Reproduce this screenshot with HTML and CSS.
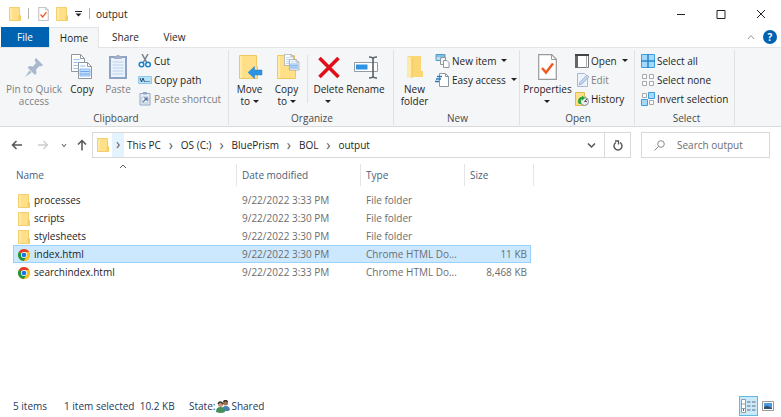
FILE: index.html
```html
<!DOCTYPE html>
<html lang="en">
<head>
    <meta charset="UTF-8">
    <meta name="viewport" content="width=device-width, initial-scale=1.0">
    <title>output</title>
    <link rel="stylesheet" href="styles.css">
</head>
<body>
    <!-- Shared icons -->
    <svg class="defs" width="0" height="0" aria-hidden="true">
        <symbol id="folder" viewBox="0 0 12 14">
            <path d="M.5.5h10v8h1v5H.5z" fill="#ffe089" stroke="#f3cf6b"/>
            <path d="M1 1h2v12H1z" fill="#ffe9a6"/>
            <path d="M9.5 8.5h2v5h-2z" fill="#f4cc62"/>
        </symbol>
        <symbol id="chrome" viewBox="0 0 24 24">
            <circle cx="12" cy="12" r="12" fill="#fbc116"/>
            <path d="M12 12 1.6 6A12 12 0 0 1 22.4 6H12z" fill="#e33b2e"/>
            <path d="M1.6 6A12 12 0 0 0 12 24l5.2-9-5.2-3z" fill="#229342"/>
            <path d="M12 6h10.4A12 12 0 0 1 12 24l5.2-9z" fill="#fbc116"/>
            <circle cx="12" cy="12" r="6" fill="#fff"/>
            <circle cx="12" cy="12" r="4.6" fill="#1a73e8"/>
        </symbol>
        <symbol id="check-page" viewBox="0 0 19 26">
            <path d="M.7.7h13l4.6 4.6v20H.7z" fill="#fff" stroke="#9a9a9a" stroke-width="1.2"/>
            <path d="M13.5.7v4.8h4.8" fill="none" stroke="#9a9a9a"/>
            <path d="m4 14 4 4.500 7-9" fill="none" stroke="#f0591e" stroke-width="2.400"/>
        </symbol>
        <symbol id="pages" viewBox="0 0 22 26">
            <path d="M.5.5h9l4 4v13H.5z" fill="#fff" stroke="#8f979f"/>
            <path d="M9.500.5v4h4" fill="none" stroke="#8f979f"/>
            <path d="M2.500 5.500h6m-6 3h9m-9 3h9m-9 3h9" stroke="#9cc3ef"/>
            <path d="M7.500 8.500h9l4 4v12h-13z" fill="#fff" stroke="#8f979f"/>
            <path d="M16.500 8.500v4h4" fill="none" stroke="#8f979f"/>
            <path d="M9.500 12h5M9 15h10v7H9z" stroke="#8dbaf0" fill="#c5dffa"/>
            <path d="M9.500 17.500h9m-9 2.500h9" stroke="#6ba6ea"/>
        </symbol>
    </svg>

    <header class="titlebar">
        <svg class="quick-icon" width="12" height="14"><use href="#folder"/></svg>
        <span class="divider"></span>
        <button class="quick" aria-label="Properties"><svg width="11" height="14"><use href="#check-page"/></svg></button>
        <button class="quick" aria-label="New folder"><svg width="12" height="14"><use href="#folder"/></svg></button>
        <button class="quick" aria-label="Customize toolbar"><svg width="7" height="6" viewBox="0 0 7 6"><path d="M0 .5h7" stroke="#222"/><path d="M.5 2.500h6l-3 3z" fill="#222"/></svg></button>
        <span class="divider"></span>
        <h1>output</h1>
        <div class="window-controls">
            <button aria-label="Minimize"><svg width="10" height="10"><path d="M1 5.500h8" stroke="#222"/></svg></button>
            <button aria-label="Maximize"><svg width="10" height="10"><path d="M1 1.500h8v8H1z" fill="none" stroke="#222"/></svg></button>
            <button aria-label="Close"><svg width="10" height="10"><path d="m1 1 8 8m0-8L1 9" stroke="#222"/></svg></button>
        </div>
    </header>

    <nav class="tabs">
        <button class="tab file">File</button>
        <button class="tab active">Home</button>
        <button class="tab">Share</button>
        <button class="tab">View</button>
        <div class="tabs-right">
            <button aria-label="Collapse ribbon"><svg width="8" height="6"><path d="m1 5 3-3.500L7 5" fill="none" stroke="#999"/></svg></button>
            <button class="help" aria-label="Help">?</button>
        </div>
    </nav>

    <main>
        <div class="ribbon">
            <section class="group clipboard">
                <div class="tools">
                    <button class="large pin" disabled>
                        <svg width="19" height="26" viewBox="0 0 19 26"><g fill="#a9b8cd"><path d="m11 4 7 7-2 1.500-1.500-.5-3.500 3.500.5 3.500-1.500 2-7.500-7.500 2-1.500 3.500.5L11 9l-1.500-3z"/><path d="m4.500 16.500 2 2L0 23z"/></g></svg>
                        <span>Pin to Quick<br>access</span>
                    </button>
                    <button class="large">
                        <svg width="22" height="26"><use href="#pages"/></svg>
                        <span>Copy</span>
                    </button>
                    <button class="large" disabled>
                        <svg width="18" height="26" viewBox="0 0 18 26"><path d="M1 3h16v21H1z" fill="#eaf2fb" stroke="#8ea3c4" stroke-width="2"/><path d="M5 5V2.500h2.500V1h3v1.500H13V5z" fill="#a3b0c7"/><path d="M3.500 8h11m-11 3h11m-11 3h11m-11 3h11m-11 3h11" stroke="#bcd2ec"/></svg>
                        <span>Paste</span>
                    </button>
                    <div class="stack">
                        <button class="small">
                            <svg width="14" height="14" viewBox="0 0 14 14"><path d="m4 0 5 9M10 0 5 9" stroke="#74818d" stroke-width="1.500"/><circle cx="3.500" cy="10.500" r="2.300" fill="none" stroke="#1b84cf" stroke-width="1.500"/><circle cx="10" cy="10.500" r="2.300" fill="none" stroke="#1b84cf" stroke-width="1.500"/></svg>Cut
                        </button>
                        <button class="small">
                            <svg width="14" height="14" viewBox="0 0 14 14"><path d="M.5 3.500h13v7H.5z" fill="#b8e1fb" stroke="#8fc9ee"/><path d="m2 5 1.500 4L5 5l1.500 4" fill="none" stroke="#294b68"/><path d="M7.500 8.500h4.500" stroke="#294b68" stroke-dasharray="1 1"/></svg>Copy path
                        </button>
                        <button class="small" disabled>
                            <svg width="14" height="14" viewBox="0 0 14 14"><path d="M2 1.500h10v11.500H2z" fill="#e6eef8" stroke="#93a6c3"/><path d="M5 0h4v2.500H5z" fill="#93a6c3"/><path d="M4 5h6v6H4z" fill="#f8fbff" stroke="#b3c2d8"/><path d="m5 10 3.500-3.500M6 6h3v3" fill="none" stroke="#5b7196" stroke-width="1.200"/></svg>Paste shortcut
                        </button>
                    </div>
                </div>
                <h2>Clipboard</h2>
            </section>

            <section class="group organize">
                <div class="tools">
                    <button class="large">
                        <svg width="26" height="26" viewBox="0 0 26 26"><path d="M2.500 1.500h17v11h1v12h-18z" fill="#ffe089" stroke="#eec960"/><path d="M3 2h2v22H3z" fill="#ffeaa8"/><path d="m11 18.500 6.500-6v3.500H25v5h-7.500v3.500z" fill="#2f93e3" stroke="#2580cb" stroke-width=".5"/></svg>
                        <span>Move<br>to <i class="caret"></i></span>
                    </button>
                    <button class="large">
                        <svg width="26" height="26" viewBox="0 0 26 26"><path d="M3.500 1.500h17v11h1v12h-18z" fill="#ffe089" stroke="#eec960"/><path d="M4 2h2v22H4z" fill="#ffeaa8"/><svg x="10" y="0" width="16" height="17" viewBox="0 0 22 26" preserveAspectRatio="none"><use href="#pages" width="22" height="26"/></svg></svg>
                        <span>Copy<br>to <i class="caret"></i></span>
                    </button>
                    <span class="separator"></span>
                    <button class="large">
                        <svg width="22" height="26" viewBox="0 0 22 26"><path d="m1.500 4 19 19m0-19-19 19" stroke="#e0101b" stroke-width="3.600"/></svg>
                        <span>Delete<br><i class="caret"></i></span>
                    </button>
                    <button class="large">
                        <svg width="26" height="26" viewBox="0 0 26 26"><path d="M1.500 8.500h23v9h-23z" fill="#fff" stroke="#939ba3"/><path d="M3 10.500h11.500v5H3z" fill="#2f93e3"/><path d="M16 3q4 0 4 2 0-2 4-2M20 4v19M16 24q4 0 4-2 0 2 4 2" fill="none" stroke="#596169" stroke-width="1.600"/></svg>
                        <span>Rename</span>
                    </button>
                </div>
                <h2>Organize</h2>
            </section>

            <section class="group new">
                <div class="tools">
                    <button class="large">
                        <svg width="18" height="26" viewBox="0 0 18 26"><path d="M1 2h14v15h2v6H1z" fill="#fbd675"/><path d="M1 2 6 4v20.500L1 22z" fill="#ffe9a6"/><path d="M6 4v20" stroke="#e6bd50" stroke-width=".7"/></svg>
                        <span>New<br>folder</span>
                    </button>
                    <div class="stack">
                        <button class="small">
                            <svg width="15" height="14" viewBox="0 0 15 14"><path d="M1 .5h9v6H1z" fill="#b8def7" stroke="#529dcc"/><path d="M1 2h9" stroke="#529dcc"/><path d="M5.500 3.500h5v7h-5z" fill="#eef3f7" stroke="#8e969e"/><path d="M8.500 6.500h3.500l2 2v5H8.500z" fill="#fff" stroke="#8e969e"/></svg>New item <i class="caret"></i>
                        </button>
                        <button class="small">
                            <svg width="15" height="14" viewBox="0 0 15 14"><path d="M4.500.5h6l3 3v10h-9z" fill="#fff" stroke="#8e969e"/><path d="M10.500.5v3h3" fill="none" stroke="#8e969e"/><path d="M2 3.500h5M1 6h5M0 8.500h4" stroke="#2b78b8" stroke-width="1.400"/></svg>Easy access <i class="caret"></i>
                        </button>
                    </div>
                </div>
                <h2>New</h2>
            </section>

            <section class="group open">
                <div class="tools">
                    <button class="large properties">
                        <svg width="19" height="26"><use href="#check-page"/></svg>
                        <span>Properties<br><i class="caret"></i></span>
                    </button>
                    <div class="stack">
                        <button class="small">
                            <svg width="14" height="14" viewBox="0 0 14 14"><path d="M.5.5h13v13H.5z" fill="#fff" stroke="#777"/><path d="M0 0h3v14H0z" fill="#666"/><path d="M0 1h14" stroke="#444" stroke-width="2"/><path d="M11.500 2v12" stroke="#aaa"/></svg>Open <i class="caret"></i>
                        </button>
                        <button class="small" disabled>
                            <svg width="14" height="14" viewBox="0 0 14 14"><path d="M2.500.5h7l3 3v10h-10z" fill="#edf3fb" stroke="#a7b8d4"/><path d="m4 12 1-3 7-7 2 2-7 7z" fill="#c3d3ec" stroke="#94abd0" stroke-width=".7"/></svg>Edit
                        </button>
                        <button class="small">
                            <svg width="14" height="14" viewBox="0 0 14 14"><path d="M.5.5h9v4h1v9H.5z" fill="#ffe089" stroke="#e0bb4f"/><circle cx="9.500" cy="9.500" r="4" fill="#e9edf0" stroke="#848c94"/><path d="M9.500 9.500 12 7M9.500 9.500H12" stroke="#555"/><path d="M3 10q0-5 4-5V3.500L10 6 7 8.500V7Q5 7 6 12q-3 0-3-2" fill="#25a436"/></svg>History
                        </button>
                    </div>
                </div>
                <h2>Open</h2>
            </section>

            <section class="group select">
                <div class="tools">
                    <div class="stack">
                        <button class="small">
                            <svg width="14" height="14" viewBox="0 0 14 14"><path d="M.5.5h13v13H.5z" fill="#a6d8fa" stroke="#3c9fe0"/><path d="M7 0v14M0 7h14" stroke="#2386ce" stroke-width="1.500"/></svg>Select all
                        </button>
                        <button class="small">
                            <svg width="14" height="14" viewBox="0 0 14 14"><path d="M1.500 1.500h4v4h-4zm7 0h4v4h-4zm-7 7h4v4h-4zm7 0h4v4h-4z" fill="#fff" stroke="#a8a8a8"/></svg>Select none
                        </button>
                        <button class="small">
                            <svg width="14" height="14" viewBox="0 0 14 14"><path d="M1.500 1.500h4v4h-4zm7 7h4v4h-4z" fill="#fff" stroke="#a8a8a8"/><path d="M7.500.5h6v6h-6zm-7 7h6v6h-6z" fill="#a6d8fa" stroke="#3c9fe0"/></svg>Invert selection
                        </button>
                    </div>
                </div>
                <h2>Select</h2>
            </section>
        </div>

        <div class="address-row">
            <button aria-label="Back"><svg width="12" height="12" viewBox="0 0 12 12"><path d="M11 6H1.500m4-4-4 4 4 4" fill="none" stroke="#555" stroke-width="1.500"/></svg></button>
            <button class="forward" aria-label="Forward" disabled><svg width="12" height="12" viewBox="0 0 12 12"><path d="M1 6h9.500m-4-4 4 4-4 4" fill="none" stroke="#ccc" stroke-width="1.300"/></svg></button>
            <button class="recent" aria-label="Recent locations"><svg width="6" height="5"><path d="m1 1 2 2.500L5 1" fill="none" stroke="#777" stroke-width="1.200"/></svg></button>
            <button class="up" aria-label="Up"><svg width="10" height="12" viewBox="0 0 10 12"><path d="M5 11.500v-10m-4 4 4-4 4 4" fill="none" stroke="#555" stroke-width="1.500"/></svg></button>
            <div class="address">
                <svg class="address-icon" width="12" height="14"><use href="#folder"/></svg>
                <span class="chevron first">›</span>
                <a href="#">This PC</a><span class="chevron">›</span>
                <a href="#">OS (C:)</a><span class="chevron">›</span>
                <a href="#">BluePrism</a><span class="chevron">›</span>
                <a href="#">BOL</a><span class="chevron">›</span>
                <a href="#">output</a>
                <button class="history" aria-label="Previous locations"><svg width="9" height="7"><path d="m1 1.500 3.500 3.500L8 1.500" fill="none" stroke="#555" stroke-width="1.500"/></svg></button>
                <button class="refresh" aria-label="Refresh"><svg width="10" height="11" viewBox="0 0 10 11"><path d="M7 2.500a4 4 0 1 1-4 0" fill="none" stroke="#555" stroke-width="1.400"/><path d="M2 1h3.500v3.500" fill="none" stroke="#555" stroke-width="1.300"/></svg></button>
            </div>
            <label class="search">
                <svg width="11" height="11" viewBox="0 0 11 11"><circle cx="7" cy="4" r="3.300" fill="none" stroke="#8b8b8b"/><path d="M4.500 6.500.5 10.500" stroke="#8b8b8b"/></svg>
                <input type="search" placeholder="Search output" aria-label="Search output">
            </label>
        </div>

        <table class="files">
            <colgroup>
                <col class="col-name"><col class="col-date"><col class="col-type"><col class="col-size"><col class="col-end">
            </colgroup>
            <thead>
                <tr>
                    <th>Name<svg class="sort" width="8" height="5"><path d="m1 4 3-3 3 3" fill="none" stroke="#666"/></svg></th>
                    <th>Date modified</th>
                    <th>Type</th>
                    <th colspan="2">Size</th>
                </tr>
            </thead>
            <tbody>
                <tr>
                    <td><svg width="12" height="14"><use href="#folder"/></svg>processes</td>
                    <td>9/22/2022 3:33 PM</td><td>File folder</td><td></td>
                </tr>
                <tr>
                    <td><svg width="12" height="14"><use href="#folder"/></svg>scripts</td>
                    <td>9/22/2022 3:30 PM</td><td>File folder</td><td></td>
                </tr>
                <tr>
                    <td><svg width="12" height="14"><use href="#folder"/></svg>stylesheets</td>
                    <td>9/22/2022 3:30 PM</td><td>File folder</td><td></td>
                </tr>
                <tr class="selected">
                    <td><svg width="12" height="12"><use href="#chrome"/></svg>index.html</td>
                    <td>9/22/2022 3:30 PM</td><td>Chrome HTML Do...</td><td>11 KB</td>
                </tr>
                <tr>
                    <td><svg width="12" height="12"><use href="#chrome"/></svg>searchindex.html</td>
                    <td>9/22/2022 3:33 PM</td><td>Chrome HTML Do...</td><td>8,468 KB</td>
                </tr>
            </tbody>
        </table>
    </main>

    <footer class="statusbar">
        <span class="count">5 items</span>
        <span class="selection">1 item selected&nbsp; 10.2 KB</span>
        <span class="state">State:
            <svg width="14" height="13" viewBox="0 0 14 13"><circle cx="9.500" cy="3" r="2.500" fill="#9a7350"/><path d="M6 11q0-5 4-5 3.500 0 4 4l-2 1z" fill="#4181b5"/><path d="M7.500 2q2-3 4 0" stroke="#3c3027" fill="none" stroke-width="1.500"/><circle cx="4.500" cy="4.500" r="2.500" fill="#c49a75"/><path d="M0 12q0-5 4.500-5T9 12q-4 2-9 0" fill="#47905e"/><path d="M2 4q2-4 5 0" stroke="#40352c" fill="none" stroke-width="1.500"/></svg>
            Shared</span>
        <div class="views">
            <button class="view active" aria-label="Details view"><svg width="15" height="14" viewBox="0 0 15 14"><path d="M.5.500h4v13h-4zM.5 5h4M.5 9.500h4" fill="#fff" stroke="#929ba2"/><path d="M6 3h3.500m1.500 0h3.500M6 7h3.500m1.500 0h3.500M6 11h3.500m1.500 0h3.500" stroke="#596e7e"/><path d="M2 11h1" stroke="#d33" stroke-width="2"/></svg></button>
            <button class="view" aria-label="Thumbnail view"><svg width="12" height="10" viewBox="0 0 12 10"><path d="M.5.500h11v9H.5z" fill="#fff" stroke="#9a9a9a"/><path d="M2 2h8v6H2z" fill="#4b9be0"/><path d="M2 8V6l3-1.500L10 7v1z" fill="#34516d"/></svg></button>
        </div>
    </footer>
</body>
</html>
```

FILE: styles.css
```css
* {
    box-sizing: border-box;
}
body {
    margin: 0;
    min-height: 100vh;
    display: flex;
    flex-direction: column;
    background: white;
    color: #1e1e1e;
    font-family: "Open Sans", "Noto Sans", sans-serif;
    font-size: 10px;
    line-height: 14px;
}
button {
    display: flex;
    flex: none;
    align-items: center;
    justify-content: center;
    padding: 0;
    border: 0;
    background: none;
    color: inherit;
    font: inherit;
    white-space: nowrap;
}
svg {
    flex: none;
}
h1, h2 {
    margin: 0;
    font-size: 10px;
    font-weight: normal;
}
main {
    flex: 1;
}
.defs {
    position: absolute;
}
.caret {
    display: inline-block;
    border: 3px solid transparent;
    border-top-color: #222;
    border-bottom: 0;
    vertical-align: 2px;
}

/* Title bar */
.titlebar {
    display: flex;
    align-items: center;
    height: 27px;
    padding-left: 9px;
}
.titlebar .divider {
    width: 1px;
    height: 11px;
    margin: 0 9px 0 7px;
    background: #b5b5b5;
}
.quick {
    margin-right: 7px;
}
.quick + .divider {
    margin-left: 0;
    margin-right: 6px;
}
.window-controls {
    display: flex;
    margin-left: auto;
}
.window-controls button {
    width: 40px;
    height: 27px;
}

/* Tabs */
.tabs {
    display: flex;
    height: 20px;
    padding-left: 1px;
}
.tab {
    width: 49px;
}
.tab.file {
    width: 48px;
    background: #0063b1;
    color: white;
}
.tab.active {
    width: 50px;
    height: 21px;
    margin-right: 2px;
    border: 1px solid #e3e4e5;
    border-bottom: 0;
    background: #f5f6f7;
    z-index: 1;
}
.tabs-right {
    display: flex;
    gap: 8px;
    align-items: center;
    margin-left: auto;
    padding-right: 4px;
}
.help {
    width: 14px;
    height: 14px;
    border-radius: 50%;
    background: #0063b1;
    color: white;
    font-weight: bold;
}

/* Ribbon */
.ribbon {
    display: flex;
    height: 80px;
    padding: 2px 0 1px 1px;
    border-top: 1px solid #e3e4e5;
    border-bottom: 1px solid #dadbdc;
    background: #f5f6f7;
}
.group {
    display: flex;
    flex-direction: column;
    border-right: 1px solid #e0e1e2;
}
.group h2 {
    margin-top: 3px;
    color: #4a4a4a;
    line-height: 14px;
    text-align: center;
}
.clipboard {
    width: 228px;
    padding-left: 3px;
}
.organize {
    width: 165px;
    padding-left: 2px;
}
.new {
    width: 126px;
    padding-left: 2px;
}
.open {
    width: 115px;
    padding-left: 2px;
}
.select {
    width: 100px;
    padding-left: 4px;
}
.tools {
    display: flex;
    height: 58px;
}
.large {
    flex-direction: column;
    justify-content: flex-start;
    width: 37px;
    padding-top: 4px;
    line-height: 12px;
}
.large span {
    margin-top: 3px;
}
.clipboard .large {
    width: 36px;
}
.clipboard .pin {
    width: 60px;
}
.large.properties {
    width: 51px;
}
.small {
    justify-content: flex-start;
    gap: 2px;
    height: 19px;
    padding-left: 2px;
}
.small .caret {
    margin-left: 3px;
}
.stack {
    padding-top: 1px;
}
button:disabled {
    color: #808080;
}
.separator {
    width: 1px;
    height: 48px;
    margin: 5px 2px 0;
    background: #e0e1e2;
}

/* Address bar */
.address-row {
    display: flex;
    align-items: center;
    height: 36px;
    padding: 0 11px;
}
.address-row > button {
    width: 12px;
    margin-right: 14px;
}
.address-row > .forward {
    margin-right: 12px;
}
.address-row > .recent {
    width: 6px;
    margin-right: 10px;
}
.address-row > .up {
    width: 10px;
    margin-right: 5px;
}
.address {
    display: flex;
    flex: 1;
    align-items: center;
    height: 26px;
    border: 1px solid #d9d9d9;
}
.address a {
    color: inherit;
    text-decoration: none;
}
.address-icon {
    margin: 0 3px 0 4px;
}
.chevron {
    width: 20px;
    color: #555;
    font-size: 14px;
    line-height: 22px;
    text-align: center;
}
.chevron.first {
    width: 12px;
    height: 24px;
    margin-right: 3px;
    background: #e5f3ff;
}
.history {
    width: 26px;
    height: 24px;
    margin-left: auto;
}
.refresh {
    width: 26px;
    height: 24px;
    border-left: 1px solid #d9d9d9;
}
.search {
    display: flex;
    align-items: center;
    width: 129px;
    height: 26px;
    margin-left: 10px;
    padding-left: 12px;
    border: 1px solid #d9d9d9;
}
.search input {
    flex: 1;
    min-width: 0;
    padding: 0 0 0 12px;
    border: 0;
    outline: 0;
    font: inherit;
}
.search input::placeholder {
    color: #6d6d6d;
}

/* File list */
.files {
    width: 521px;
    margin: 1px 0 0 13px;
    table-layout: fixed;
    border-collapse: separate;
    border-spacing: 0;
}
.col-name { width: 224px; }
.col-date { width: 124px; }
.col-type { width: 104px; }
.col-size { width: 66px; }
.col-end { width: 3px; }
.files th {
    position: relative;
    height: 22px;
    padding: 0 0 0 5px;
    border-right: 1px solid #e5e5e5;
    color: #4c607a;
    font-weight: normal;
    text-align: left;
}
.files th:first-child {
    padding-left: 3px;
}
.sort {
    position: absolute;
    top: 0;
    left: 106px;
}
.files tbody::before {
    content: "";
    display: block;
    height: 5px;
}
.files td {
    height: 18px;
    padding: 0 0 0 5px;
    border: solid transparent;
    border-width: 1px 0;
    color: #6d6d6d;
    line-height: 16px;
    white-space: nowrap;
}
.files td:first-child {
    padding-left: 4px;
    border-left-width: 1px;
    color: #1e1e1e;
}
.files td:last-child {
    padding-right: 3px;
    border-right-width: 1px;
    text-align: right;
}
.files td svg {
    margin: -1px 4px -1px 0;
    vertical-align: middle;
}
.files .selected td {
    border-color: #99d1ff;
    background: #cce8ff;
}

/* Status bar */
.statusbar {
    display: flex;
    align-items: center;
    height: 22px;
    padding: 0 4px 0 13px;
    color: #1e395b;
}
.count {
    width: 51px;
}
.selection {
    width: 125px;
}
.state {
    display: flex;
    align-items: center;
    gap: 1px;
}
.views {
    display: flex;
    margin-left: auto;
}
.view {
    width: 19px;
    height: 20px;
}
.view.active {
    border: 1px solid #5fb8e6;
    background: #cbe9f8;
}
```
